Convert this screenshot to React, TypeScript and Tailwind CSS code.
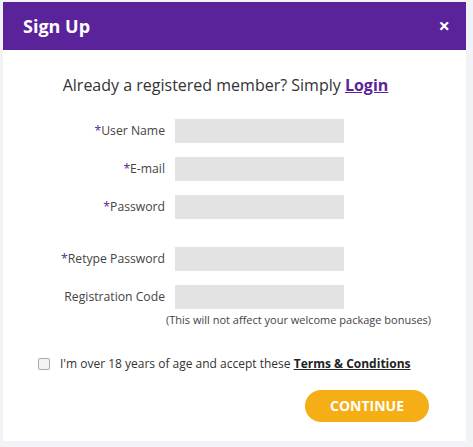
export default function App() {
  const rows = [
    { label: "User Name", req: true, mt: "mt-0" },
    { label: "E-mail", req: true, mt: "mt-[14px]" },
    { label: "Password", req: true, mt: "mt-[14px]" },
    { label: "Retype Password", req: true, mt: "mt-[28px]" },
    { label: "Registration Code", req: false, mt: "mt-[14px]" },
  ]

  return (
    <div className="w-[473px] h-[447px] bg-[#f1f3f7] pt-[2px] pl-[3px] font-['Open_Sans',sans-serif]">
      <div className="w-[463px] h-[439px] bg-white">
        <div className="h-[48px] bg-[#5b2399] flex items-center justify-between pl-[20px] pr-[16px]">
          <h2 className="text-white text-[18px] font-bold">Sign Up</h2>
          <span className="text-white text-[20px] font-bold leading-none">×</span>
        </div>

        <p className="mt-[23px] text-center text-[16px] text-[#333] pr-[18px]">
          Already a registered member? Simply{" "}
          <a className="font-bold text-[#5b2399] underline">Login</a>
        </p>

        <div className="mt-[22px]">
          {rows.map((r) => (
            <div key={r.label} className={`flex items-center h-[24px] ${r.mt}`}>
              <label className="w-[162px] text-right text-[12.2px] text-[#444]">
                {r.req && <span className="text-[#5b2399]">*</span>}
                {r.label}
              </label>
              <div className="ml-[10px] w-[169px] h-[24px] bg-[#e3e3e3]" />
            </div>
          ))}
          <p className="mt-[3px] pl-[163px] text-[11px] text-[#444]">
            (This will not affect your welcome package bonuses)
          </p>
        </div>

        <div className="mt-[26px] flex items-center pl-[35px]">
          <span className="w-[12px] h-[12px] border border-[#aaa] rounded-[2px] bg-[#f3f3f3]" />
          <span className="ml-[10px] text-[12px] text-[#333]">
            I'm over 18 years of age and accept these{" "}
            <a className="font-bold text-[#222] underline">Terms &amp; Conditions</a>
          </span>
        </div>

        <div className="mt-[17px] flex justify-end pr-[37px]">
          <button className="w-[124px] h-[32px] rounded-full bg-[#f5ae16] text-white text-[14px] font-bold">
            CONTINUE
          </button>
        </div>
      </div>
    </div>
  )
}
